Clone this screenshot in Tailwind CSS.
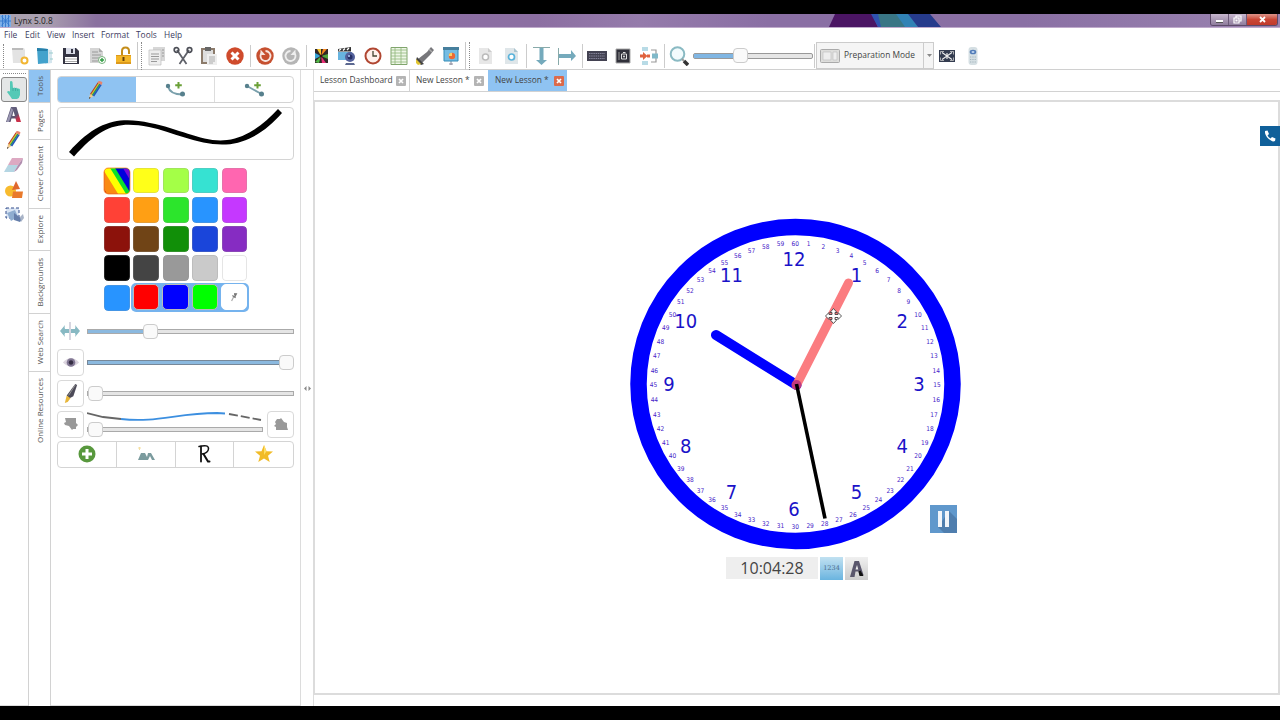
<!DOCTYPE html>
<html lang="en">
<head>
  <meta charset="UTF-8">
  <meta name="viewport" content="width=device-width, initial-scale=1.0">
  <title>Lynx 5.0.8</title>
  <script src="https://cdn.jsdelivr.net/npm/@tailwindcss/browser@4"></script>
</head>
<body class="w-[1280px] h-[720px] overflow-hidden bg-black py-3.5 font-['Open_Sans','Noto_Sans',sans-serif] text-[8.400px] text-[#444]">
  <!-- shared icons -->
  <svg class="absolute size-0">
    <defs>
      <linearGradient id="metal" x1="0" y1="0" x2="1" y2="1">
        <stop offset="0" stop-color="#6c6887"/><stop offset="0.6" stop-color="#5b5672"/><stop offset="0.8" stop-color="#c9304a"/>
      </linearGradient>
    </defs>
    <symbol id="pencil" viewBox="0 0 20 20">
      <path d="M3 19l1-5 3.500 2z" fill="#f0c890"/>
      <path d="M3 19l.5-2 1.200.8z" fill="#222"/>
      <path d="M4.800 14.400L12.200 3l1.400.8L6 15.200z" fill="#e8d020"/>
      <path d="M5.800 15L13.300 3.500l1.200.7L7 15.700z" fill="#2a9a50"/>
      <path d="M6.800 15.600L14.200 4.200l1.500.8L8.200 16.400z" fill="#2458b8"/>
      <path d="M4 14L11.600 2.600l.9.500L5 14.500z" fill="#b84020"/>
      <path d="M11.600 2.800l1-1.800q2.800-.3 3.900 1.600L15.500 5z" fill="#e8846c"/>
    </symbol>
    <symbol id="close" viewBox="0 0 10 10">
      <rect width="10" height="10" rx="1"/>
      <path d="M3 3l4 4M7 3L3 7" stroke="#fff" stroke-width="1.700"/>
    </symbol>
  </svg>

  <div class="h-[692px] bg-white flex flex-col">
    <!-- title bar -->
    <header class="relative h-[14px] shrink-0 flex items-center justify-between bg-[#8e73a6] border-b border-[#bfaacb]">
      <svg class="absolute inset-0" width="1280" height="13" viewBox="0 0 1280 13">
        <defs>
          <linearGradient id="glass">
            <stop offset="0" stop-color="#a8a0ad"/><stop offset="0.035" stop-color="#aaa0b0"/><stop offset="0.075" stop-color="#8a719f"/><stop offset="0.2" stop-color="#8c70a7"/><stop offset="0.42" stop-color="#8c6fa2"/><stop offset="0.5" stop-color="#957bab"/><stop offset="0.6" stop-color="#8a6fa4"/><stop offset="0.8" stop-color="#8a70a4"/><stop offset="1" stop-color="#9a83b0"/>
          </linearGradient>
        </defs>
        <rect width="1280" height="13" fill="url(#glass)"/>
        <path d="M835 0h37l6 13h-49z" fill="#4b1564"/>
        <path d="M871 0h13l2 13h-8z" fill="#2f53b0"/>
        <path d="M878 0h22l6 13h-25z" fill="#397685"/>
        <path d="M896 0h13l9 13h-13z" fill="#3182b5"/>
        <path d="M908 0h22l11 13h-23z" fill="#263b8c"/>
      </svg>
      <div class="relative flex items-center text-[#222]">
        <svg width="12" height="12" viewBox="0 0 12 12"><rect width="11" height="12" fill="#7db0e8"/><path d="M5.500 0v12M0 6h11M1.500 1.500l8 9M9.500 1.500l-8 9M2.500 0v12M8.500 0v12" stroke="#2f74cc" stroke-width="0.800"/></svg>
        <span class="ml-[2px] text-[8.300px] leading-3">Lynx 5.0.8</span>
      </div>
      <div class="relative self-start mr-[2px] flex h-[12px] rounded-b-[3px] border border-t-0 border-[#5d4a69] overflow-hidden">
        <span class="w-[18px] bg-linear-to-b from-[#c7b6ce] to-[#8f7d9d] border-r border-[#6d5a79] flex justify-center items-center"><i class="mt-1 w-[7px] h-[3px] bg-white border-b border-[#555]"></i></span>
        <span class="w-[18px] bg-linear-to-b from-[#c7b6ce] to-[#8f7d9d] border-r border-[#6d5a79] flex justify-center items-center">
          <svg width="9" height="9" viewBox="0 0 9 9" fill="none" stroke="#fff" stroke-width="1.200"><path d="M3 3V1h5v5H6"/><path d="M1 3h5v5H1zM3 5h1v1H3z"/></svg>
        </span>
        <span class="w-[30px] bg-linear-to-b from-[#dc9389] via-[#c94736] to-[#c03a2c] flex justify-center items-center">
          <svg width="7" height="7" viewBox="0 0 7 7"><path d="M1 1l5 5M6 1L1 6" stroke="#fff" stroke-width="1.800"/></svg>
        </span>
      </div>
    </header>

    <!-- menu -->
    <nav class="h-[13px] shrink-0 flex items-center pl-[4px] text-[#3d3b60] leading-[13px]">
      <span class="w-[21px]">File</span><span class="w-[22px]">Edit</span><span class="w-[25px]">View</span><span class="w-[29px]">Insert</span><span class="w-[35px]">Format</span><span class="w-[28px]">Tools</span><span>Help</span>
    </nav>

    <!-- toolbar -->
    <div class="h-[29px] shrink-0 flex items-center pt-px border-b border-[#d0d0d0]">
      <div class="w-[6px] h-[24px] flex pl-[3px]"><i class="border-l border-dotted border-[#888]"></i></div>
      <div class="flex [&>svg]:mx-[3px]">
        <svg width="20" height="20" viewBox="0 0 20 20"><path d="M3 2h12l1 2v13H4z" fill="#e3e3e3"/><path d="M3 2h11v2H3z" fill="#bbb"/><circle cx="15.500" cy="14.500" r="3" fill="#fff" stroke="#f2b632" stroke-width="2"/></svg>
        <svg width="20" height="20" viewBox="0 0 20 20"><path d="M9 3l8 1v13l-7 1z" fill="#d5e6ee"/><path d="M2 2l11 1v14L3 18z" fill="#43a2cc"/><path d="M2 2l11 1-1 2H2z" fill="#267fa9"/><path d="M14 7h4M15 13h3" stroke="#9cc" /></svg>
        <svg width="20" height="20" viewBox="0 0 20 20"><path d="M2 2h13l3 3v13H2z" fill="#343442"/><path d="M5 2h9v6H5z" fill="#dadde8"/><path d="M10 3h2v4h-2z" fill="#343442"/><path d="M4 11h12v6H4z" fill="#fff"/><path d="M4 13h12M4 15.500h12" stroke="#aaa"/></svg>
        <svg width="20" height="20" viewBox="0 0 20 20"><path d="M3 2h9l4 4v11H3z" fill="#d5d5d5"/><path d="M12 2l4 4h-4z" fill="#aaa"/><path d="M5 6h6M5 9h9M5 12h7M5 15h6" stroke="#999"/><circle cx="15" cy="14" r="3.500" fill="#fff" stroke="#79b37d"/><path d="M15 12v4M13 14h4" stroke="#2f9c42" stroke-width="1.400"/></svg>
        <svg width="20" height="20" viewBox="0 0 20 20"><path d="M9 10V5q0-3.500 3.500-3.500T16 5v3" fill="none" stroke="#c48d1a" stroke-width="2"/><path d="M3 9h15v9H3z" fill="#f3b628"/><path d="M3 9h15v1H3zM3 16h15v2H3z" fill="#dc991c"/><path d="M9.500 11h2v4h-2z" fill="#68430b"/></svg>
      </div>
      <div class="w-[8px] h-[28px] flex pl-px gap-[3px]"><i class="border-l border-[#c8c8c8]"></i><i class="border-l border-dotted border-[#888]"></i></div>
      <div class="flex [&>svg]:mx-[3px]">
        <svg width="20" height="20" viewBox="0 0 20 20"><path d="M6 1h12v14H6z" fill="#d7d7d7"/><path d="M2 4h12v15H2z" fill="#eee" stroke="#bbb" stroke-width=".7"/><path d="M4 8h8M4 10.500h8M4 13h8M4 15.500h6M15 4h2M15 7h2M15 10h2" stroke="#999"/></svg>
        <svg width="20" height="20" viewBox="0 0 20 20"><path d="M4 4l9.500 14M16 4L6.500 18" stroke="#5f6169" stroke-width="1.800"/><circle cx="3.500" cy="4" r="2.300" fill="none" stroke="#4d4f57" stroke-width="1.700"/><circle cx="16.500" cy="4" r="2.300" fill="none" stroke="#4d4f57" stroke-width="1.700"/></svg>
        <svg width="20" height="20" viewBox="0 0 20 20"><path d="M2 2h14v16H2z" fill="#8c7b6b"/><path d="M4 4h10v12H4z" fill="#ddd"/><path d="M6 1h6v4H6z" fill="#666"/><path d="M8 8h10v11H8z" fill="#eee"/><path d="M10 11h6M10 13h6M10 15h6M10 17h4" stroke="#999" stroke-width=".8"/></svg>
        <svg width="20" height="20" viewBox="0 0 20 20"><circle cx="10" cy="10" r="8.700" fill="#cf4b2c"/><path d="M6.500 6.500l7 7M13.500 6.500l-7 7" stroke="#fff" stroke-width="3"/></svg>
      </div>
      <div class="w-[4px] h-[22px] flex pl-[2px]"><i class="border-l border-[#ccc]"></i></div>
      <div class="flex [&>svg]:mx-[3px]">
        <svg width="20" height="20" viewBox="0 0 20 20"><circle cx="10" cy="10" r="8.700" fill="#c65030"/><path d="M6.500 7a5 5 0 1 0 4-2" fill="none" stroke="#f6e5df" stroke-width="1.800"/><path d="M5.500 3.500v5.500h5z" fill="#f6e5df"/></svg>
        <svg width="20" height="20" viewBox="0 0 20 20"><circle cx="10" cy="10" r="8.700" fill="#b5b5b5"/><path d="M13.500 7a5 5 0 1 1-4-2" fill="none" stroke="#eee" stroke-width="1.800"/><path d="M14.500 3.500v5.500h-5z" fill="#eee"/></svg>
      </div>
      <div class="w-[4px] h-[22px] flex pl-[2px]"><i class="border-l border-[#ccc]"></i></div>
      <div class="flex [&>svg]:mx-[3px]">
        <svg width="20" height="20" viewBox="0 0 20 20"><path d="M4 3h13v14H4z" fill="#312726"/><path d="M10 10L6 3h4z" fill="#f2c22c"/><path d="M10 10L12 3h4z" fill="#f58620"/><path d="M10 10l7-2v5z" fill="#50a83b"/><path d="M10 10l5 7h-4z" fill="#e93078"/><path d="M10 10l-2 7-4-1z" fill="#51b947"/><path d="M10 10L4 13V7z" fill="#35a3d3"/><circle cx="10" cy="10" r="1.500" fill="#311"/></svg>
        <svg width="20" height="20" viewBox="0 0 20 20"><path d="M1 6h14v8H1z" fill="#68b4df"/><path d="M1 3l13-2v4.500H1z" fill="#333"/><path d="M2 4.500l2-1.500M6 4.500l2-2M10 4l2-2" stroke="#fff" stroke-width="1.400"/><circle cx="13" cy="11" r="5" fill="#54619b"/><circle cx="13" cy="11" r="2.500" fill="#263067"/><circle cx="12" cy="10" r="1" fill="#b5d3ff"/><path d="M9 17h8l1 2H8z" fill="#5c6991"/></svg>
        <svg width="20" height="20" viewBox="0 0 20 20"><circle cx="10" cy="10" r="7.500" fill="#fff0eb" stroke="#b04631" stroke-width="2"/><path d="M10 5v5h4" fill="none" stroke="#443" stroke-width="1.300"/></svg>
        <svg width="20" height="20" viewBox="0 0 20 20"><path d="M2 1.500h16v17H2z" fill="#eef6e7" stroke="#80a56c"/><path d="M2 4h16M2 7h16M2 10h16M2 13h16M2 16h16M6 2v16M12 2v16" stroke="#91b77c" stroke-width=".8"/></svg>
        <svg width="20" height="20" viewBox="0 0 20 20"><path d="M16 1l3 3-4 5-8 8-4-4 9-7z" fill="#77777b"/><path d="M14 3l3 3" stroke="#aaa" stroke-width="1.500"/><path d="M2 11l7 7-3 1-5-5z" fill="#454545"/><path d="M1 13l5 5-3 1-2-2z" fill="#e2c632"/></svg>
        <svg width="20" height="20" viewBox="0 0 20 20"><path d="M10 15v4M8 18h4" stroke="#889"/><path d="M3 3h14v12H3z" fill="#75bde4" stroke="#348bb7"/><path d="M2 1h16v3H2z" fill="#467f9d"/><circle cx="11" cy="10" r="3.200" fill="#ed6a35"/><path d="M11 10V6.800a3.200 3.200 0 0 0-3.200 3.200z" fill="#fbd164"/></svg>
      </div>
      <div class="w-[8px] h-[28px] flex pl-px gap-[3px]"><i class="border-l border-[#c8c8c8]"></i><i class="border-l border-dotted border-[#888]"></i></div>
      <div class="flex [&>svg]:mx-[3px]">
        <svg width="20" height="20" viewBox="0 0 20 20"><path d="M4 2h9l4 4v12H4z" fill="#e7e7e7"/><path d="M13 2l4 4h-4z" fill="#ccc"/><circle cx="10.500" cy="11" r="3" fill="#fff" stroke="#bbb" stroke-width="1.500"/></svg>
        <svg width="20" height="20" viewBox="0 0 20 20"><path d="M4 2h9l4 4v12H4z" fill="#dfe6e9"/><path d="M13 2l4 4h-4z" fill="#aac4cf"/><circle cx="10.500" cy="11" r="3" fill="#fff" stroke="#5bb3da" stroke-width="1.700"/></svg>
      </div>
      <div class="w-[4px] h-[24px] flex pl-[2px]"><i class="border-l border-[#ccc]"></i></div>
      <div class="flex [&>svg]:mx-[3px]">
        <svg width="20" height="20" viewBox="0 0 20 20"><path d="M2 1.500h17" stroke="#8aa"/><path d="M8.500 2h4v12H16l-5.500 5L5 14h3.500z" fill="#75aabc"/></svg>
        <svg width="20" height="20" viewBox="0 0 20 20"><path d="M1.500 2v17" stroke="#8aa"/><path d="M2 8h12V4l5 6-5 5v-3H2z" fill="#75aabc"/></svg>
      </div>
      <div class="w-[4px] h-[24px] flex pl-[2px]"><i class="border-l border-[#ccc]"></i></div>
      <div class="flex [&>svg]:mx-[3px]">
        <svg width="20" height="20" viewBox="0 0 20 20"><path d="M0 5h20v10H0z" fill="#434252"/><path d="M2 7.500h16M2 10h16M2 12.500h16" stroke="#85849a" stroke-dasharray="1.500 .7"/></svg>
        <svg width="20" height="20" viewBox="0 0 20 20"><path d="M3 3h14v14H3z" fill="#30303a" stroke="#aaa"/><path d="M6 6v8" stroke="#999"/><path d="M8.500 8h5v5h-5zM10 6.500h2.500" fill="none" stroke="#ddd"/><circle cx="11" cy="10.500" r="1" fill="#ddd"/></svg>
        <svg width="20" height="20" viewBox="0 0 20 20"><path d="M12 4h5v4M17 12v4h-5M9 4H5M9 16H5" fill="none" stroke="#999" stroke-width="1.200"/><path d="M3 1h6v4H3zM3 15h6v4H3z" fill="#b8dbe6"/><path d="M13 7.500h6v5h-6z" fill="#80b9c9"/><path d="M1 8.500h3V6l4.500 4L4 14v-2.500H1z" fill="#df633f"/><path d="M8 8.500h3v3H8z" fill="#df633f"/></svg>
      </div>
      <div class="w-[4px] h-[24px] flex pl-[2px]"><i class="border-l border-[#ccc]"></i></div>
      <svg class="mx-[3px]" width="20" height="20" viewBox="0 0 20 20"><circle cx="8.500" cy="8" r="6.800" fill="#f2fbfd" stroke="#8abac3" stroke-width="2"/><path d="M13 13l2 2" stroke="#999" stroke-width="2"/><path d="M15 15l4 4" stroke="#333" stroke-width="3.500"/></svg>
      <!-- zoom slider -->
      <div class="relative ml-px w-[120px] h-[6px] rounded-[2px] border border-[#999] bg-[#e6e6e6]">
        <div class="w-[45px] h-full bg-[#80b6e3]"></div>
        <i class="absolute left-[39px] -top-[6px] size-[15px] rounded-[4px] border border-[#ccc] bg-[#fafafa]"></i>
      </div>
      <div class="w-[3px] h-[24px] flex pl-[1px]"><i class="border-l border-[#ccc]"></i></div>
      <button class="h-[27px] w-[118px] flex items-center border border-[#ccc] bg-[#f5f5f5]">
        <svg class="ml-[3px] shrink-0" width="20" height="14" viewBox="0 0 20 14"><rect x=".5" y=".5" width="19" height="13" rx="1" fill="#dededc" stroke="#aaa"/><path d="M3 3h8v8H3zM13 3h4v8h-4z" fill="#eee" stroke="#c2c2c2" stroke-width=".7"/></svg>
        <span class="ml-[4px] w-[79px] shrink-0 text-left whitespace-nowrap">Preparation Mode</span>
        <span class="h-full flex items-center border-l border-[#ccc] pl-[3px]"><svg width="5" height="3" viewBox="0 0 5 3"><path d="M0 0h5L2.500 3z" fill="#888"/></svg></span>
      </button>
      <div class="flex [&>svg]:mx-[3px]">
        <svg width="20" height="20" viewBox="0 0 20 20"><path d="M2 4h16v12H2z" fill="#343c50"/><path d="M5 6.500l10 7M15 6.500l-10 7M10 7v6" stroke="#eee" stroke-width="1.100"/><path d="M3.500 8.500V5.500H7M13 5.500h3.500v3M3.500 11.500v3H7M13 14.500h3.500v-3" stroke="#ccc" stroke-width=".8" fill="none"/></svg>
        <svg width="20" height="20" viewBox="0 0 20 20"><rect x="5.500" y="1" width="9" height="18" rx="3" fill="#d5dfe3"/><ellipse cx="10" cy="6" rx="3.300" ry="2.300" fill="#527cb8"/><ellipse cx="10" cy="6" rx="1.500" ry="1" fill="#bcd2ef"/><path d="M7 11h6M7 13.500h6M7 16h6" stroke="#a5b6be" stroke-dasharray="1.300 1"/></svg>
      </div>
    </div>

    <main class="flex-1 min-h-0 flex">
      <!-- tool strip -->
      <aside class="w-[28px] flex flex-col items-center border-b border-[#ddd]">
        <i class="mt-[3px] w-[23px] border-t border-dotted border-[#888]"></i>
        <div class="mt-[3px] w-[26px] h-[25px] rounded-[3px] border border-[#888] bg-[#e4e6e6] flex items-center justify-center">
          <svg width="20" height="20" viewBox="0 0 20 20"><path d="M6 1.500q1.500-1 2.500.5L9 8q1.500-1 2.500 0 1.500-.7 2.200.5 1.800-.4 2.300 1L16 15q-.500 3-3 4H8l-2-3-3-4q1-1.500 3-.5z" fill="#54c9b6"/><path d="M9 8v3M11.500 8v3M13.700 9v2" stroke="#359c93" stroke-width=".6"/></svg>
        </div>
        <div class="mt-[3px] flex flex-col gap-[5px]">
          <svg width="20" height="20" viewBox="0 0 20 20"><path d="M7 2h5.500L17 17h-4.500l-1-3.500H7.500L6.500 17H2z" fill="url(#metal)"/><path d="M8.300 11l1.200-5 1.400 5z" fill="#fff"/><path d="M2.500 17L7.500 3l1.500 2-4 12z" fill="#9a97b2"/></svg>
          <svg width="20" height="20"><use href="#pencil"/></svg>
          <svg width="20" height="20" viewBox="0 0 20 20"><path d="M8 3h11l-5 7H4z" fill="#dda9c2"/><path d="M4 10h10l-4 7H0z" fill="#b5d6e3"/><path d="M14 10l5-7-1 5-5 7-3 2z" fill="#b18eaf"/></svg>
          <svg width="20" height="20" viewBox="0 0 20 20"><circle cx="6.500" cy="11" r="5.500" fill="#f8bb2e"/><path d="M12 1l4 8-8 1z" fill="#df682f"/><path d="M9 11.500h10l-1 6.500H8z" fill="#e97a2c"/></svg>
          <svg width="20" height="20" viewBox="0 0 20 20"><rect x="2" y="3" width="13" height="10" fill="#dae5f4" stroke="#334c8b" stroke-dasharray="3 2"/><path d="M3 8l8-3 3 7-7 4z" fill="#8fadd0"/><path d="M10 8l8 6-2 3-6-2z" fill="#657eaa"/><path d="M16 12l3-3 1 4-3 4z" fill="#a9b4c7"/></svg>
        </div>
      </aside>

      <!-- vertical tabs -->
      <nav class="w-[23px] border-x border-[#d2d2d2] flex flex-col text-[8px] text-[#555] [&>div]:flex [&>div]:items-center [&>div]:justify-center [&>div]:border-b [&>div]:border-[#d2d2d2] [&_span]:[writing-mode:vertical-rl] [&_span]:rotate-180 [&_span]:whitespace-nowrap [&_span]:leading-none">
        <div class="h-[33px] bg-[#8fc3f2]"><span>Tools</span></div>
        <div class="h-[37px]"><span>Pages</span></div>
        <div class="h-[69px]"><span>Clever Content</span></div>
        <div class="h-[42px]"><span>Explore</span></div>
        <div class="h-[63px]"><span>Backgrounds</span></div>
        <div class="h-[58px]"><span>Web Search</span></div>
        <div class="h-[78px] border-b-0!"><span>Online Resources</span></div>
      </nav>

      <!-- pen settings -->
      <section class="w-[250px] px-[6px] pt-[6px] border-r border-b border-[#dcdcdc] flex flex-col">
        <div class="h-[27px] w-[237px] grid grid-cols-3 rounded-[4px] border border-[#d4d4d4] overflow-hidden [&>div]:flex [&>div]:items-center [&>div]:justify-center">
          <div class="bg-[#8fc3f2]"><svg class="mr-[2px]" width="20" height="20"><use href="#pencil"/></svg></div>
          <div class="border-r border-[#ddd]"><svg width="22" height="20" viewBox="0 0 22 20"><path d="M4 6.500q2 8 14.500 8" fill="none" stroke="#7aa0ac" stroke-width="1.800"/><circle cx="4" cy="6" r="2.200" fill="#57808d"/><circle cx="18.500" cy="14" r="2.500" fill="#57808d"/><path d="M14.500 2v6.500M11.200 5.200h6.600" stroke="#6aa037" stroke-width="2"/></svg></div>
          <div><svg width="22" height="20" viewBox="0 0 22 20"><path d="M4 6l14.500 8" fill="none" stroke="#7aa0ac" stroke-width="1.800"/><circle cx="4" cy="6" r="2.200" fill="#57808d"/><circle cx="18.500" cy="14" r="2.500" fill="#57808d"/><path d="M14.500 2v6.500M11.200 5.200h6.600" stroke="#6aa037" stroke-width="2"/></svg></div>
        </div>
        <div class="mt-[4px] h-[53px] w-[237px] rounded-[4px] border border-[#d4d4d4]">
          <svg width="235" height="51" viewBox="58 108 235 51"><path d="M69 152C98 119 121 117 150 123C181 129 204 143 227 140C248 137 264 124 278 109L282 113C267 130 249 143 226 144.500C200 146 173 132 149 127C119 121 102 125 74 156.500z"/></svg>
        </div>

        <!-- palette -->
        <div class="mt-[6.500px] ml-[45.700px] grid grid-cols-5 gap-[1.400px] w-[146px] [&>i]:size-[27.900px] [&>i]:rounded-[5px] [&>i]:border [&>i]:border-white [&>i]:bg-clip-padding [&>i]:shadow-[inset_0_0_0_1px_rgba(150,150,150,0.25)]">
          <svg width="28" height="28" viewBox="0 0 28 28"><defs><clipPath id="sw"><rect x="1.500" y="1.500" width="25" height="25" rx="4"/></clipPath></defs><rect x=".5" y=".5" width="27" height="27" rx="5" fill="#ffa64d"/><g clip-path="url(#sw)"><path d="M0 0h28v28H0z" fill="#d01810"/><path d="M-15-4l21 34h30V-4z" fill="#fa8a12"/><path d="M-4-4l21 34h15V-4z" fill="#ff0"/><path d="M4-4l21 34h12V-4z" fill="#0ce02b"/><path d="M9-4l21 34V-4z" fill="#00d"/><path d="M17-4l20 34V-4z" fill="#7a0ada"/></g></svg>
          <i class="bg-[#ffff19]"></i><i class="bg-[#a4ff47]"></i><i class="bg-[#36e2d2]"></i><i class="bg-[#ff66b0]"></i>
          <i class="bg-[#ff4136]"></i><i class="bg-[#ff9f14]"></i><i class="bg-[#2ce52c]"></i><i class="bg-[#2894ff]"></i><i class="bg-[#c538ff]"></i>
          <i class="bg-[#8c120b]"></i><i class="bg-[#704416]"></i><i class="bg-[#118f08]"></i><i class="bg-[#1a45da]"></i><i class="bg-[#862cc2]"></i>
          <i class="bg-black"></i><i class="bg-[#444]"></i><i class="bg-[#999]"></i><i class="bg-[#cacaca]"></i><i class="bg-white"></i>
          <i class="bg-[#2894ff]"></i>
          <div class="col-span-4 -m-px w-[118px] h-[29px] rounded-[5px] bg-[#75b3ee] flex items-center gap-[3px] pl-[2px] [&>i]:size-[26.300px] [&>i]:rounded-[5px] [&>i]:border [&>i]:border-[#bbb]">
            <i class="bg-[#f00]"></i><i class="bg-[#00f]"></i><i class="bg-[#0f0]"></i>
            <i class="bg-white flex items-center justify-center border-white!"><svg width="8" height="10" viewBox="0 0 10 12"><path d="M5 5L2 11" stroke="#aaa" stroke-width="1.500"/><path d="M3 4l4 3M5 2h3l-2 4" stroke="#777" fill="#777" stroke-width="1.500"/></svg></i>
          </div>
        </div>

        <!-- sliders -->
        <div class="mt-[6px] flex flex-col gap-[4px]">
          <div class="h-[27px] flex items-center">
            <div class="w-[26px] flex justify-center"><svg width="20" height="18" viewBox="0 0 20 18"><path d="M10 0v18" stroke="#bbc" stroke-width="1.200"/><path d="M0 9l5-6q-1 2.500 0 4h4v4H5q-1 1.500 0 4zM20 9l-5-6q1 2.500 0 4h-4v4h4q1 1.500 0 4z" fill="#88b9c3"/></svg></div>
            <div class="relative ml-[4px] w-[207px] h-[5px] border border-[#aaa] bg-[#e5e5e5]"><div class="w-[62px] h-full bg-[#8bb9df]"></div><i class="absolute left-[55px] -top-[6px] size-[15px] rounded-[4px] border border-[#ccc] bg-[#fafafa]"></i></div>
          </div>
          <div class="h-[27px] flex items-center">
            <div class="size-[27px] rounded-[4px] border border-[#d9d9d9] flex items-center justify-center"><svg width="18" height="13" viewBox="0 0 20 14"><path d="M1 7q9-10 18 0-9 9-18 0" fill="#dcd5df"/><circle cx="10" cy="7" r="4.800" fill="#827894"/><circle cx="10" cy="7" r="2.500" fill="#352d43"/></svg></div>
            <div class="relative ml-[3px] w-[207px] h-[5px] border border-[#789] bg-[#8bb9df]"><i class="absolute left-[191px] -top-[6px] size-[15px] rounded-[4px] border border-[#ccc] bg-[#fafafa]"></i></div>
          </div>
          <div class="h-[27px] flex items-center">
            <div class="size-[27px] rounded-[4px] border border-[#d9d9d9] flex items-center justify-center"><svg width="17" height="21" viewBox="0 0 18 22"><path d="M14 1l2 1-4 12-4 2-3-3z" fill="#4c4a58"/><path d="M14 2L7 13" stroke="#999" /><path d="M5 13l4 3-3 4-3 1z" fill="#e8b73b"/></svg></div>
            <div class="relative ml-[3px] w-[207px] h-[5px] border border-[#aaa] bg-[#e5e5e5]"><i class="absolute left-0 -top-[6px] size-[15px] rounded-[4px] border border-[#ccc] bg-[#fafafa]"></i></div>
          </div>
          <div class="h-[27px] flex items-center">
            <div class="size-[27px] rounded-[4px] border border-[#d9d9d9] flex items-center justify-center"><svg width="16" height="14" viewBox="0 0 16 14"><path d="M2 1h11v5l2 2-2 2v2h-3l-1 1-3-4-4-1L1 6l2-1z" fill="#999"/></svg></div>
            <div class="ml-[3px] w-[180px] h-full flex flex-col gap-[4px]">
              <svg width="176" height="12" viewBox="0 0 176 12"><g fill="none" stroke-width="1.800"><path d="M0 2l16 4 18 2" stroke="#666"/><path d="M34 8C70 12 90 2 130 2l8 .5" stroke="#3c8fe0"/><path d="M142 3l32 6" stroke="#666" stroke-dasharray="9 3"/></g></svg>
              <div class="relative w-[176px] h-[5px] border border-[#aaa] bg-[#e5e5e5]"><i class="absolute left-0 -top-[6px] size-[15px] rounded-[4px] border border-[#ccc] bg-[#fafafa]"></i></div>
            </div>
            <div class="size-[27px] rounded-[4px] border border-[#d9d9d9] flex items-center justify-center"><svg width="16" height="14" viewBox="0 0 16 14"><path d="M2 5l2-3h3l1-1 3 4 3 1v4l1 3H3v-3L1 9l2-2z" fill="#999"/></svg></div>
          </div>
        </div>

        <div class="mt-[3px] h-[27px] w-[237px] grid grid-cols-4 rounded-[4px] border border-[#d4d4d4] divide-x divide-[#d4d4d4] [&>div]:flex [&>div]:items-center [&>div]:justify-center">
          <div><svg width="18" height="18" viewBox="0 0 18 18"><circle cx="9" cy="9" r="8.500" fill="#58983d"/><path d="M9 4v10M4 9h10" stroke="#fff" stroke-width="3"/></svg></div>
          <div><svg width="18" height="18" viewBox="0 0 18 18"><path d="M1 3h3M2.500 2v3" stroke="#f5dfa0"/><path d="M1 15l3-7h4l2 4 1-4h3l4 7h-3l-2-4-2 4z" fill="#7b9b9e"/></svg></div>
          <div><svg width="16" height="20" viewBox="0 0 16 20" fill="none" stroke="#111" stroke-linecap="round"><path d="M3 2.500Q13 0 12.500 5 12 9 6 10" stroke-width="1.500"/><path d="M5 2.500V17.500" stroke-width="1.800"/><path d="M7.500 10l4.500 7.500h1.500" stroke-width="2"/></svg></div>
          <div><svg width="20" height="20" viewBox="0 0 20 20"><path d="M10 1l2.500 6.200 6.500.3-5 4.200 1.700 6.300L10 14.400 4.300 18 6 11.700 1 7.500l6.500-.3z" fill="#f1bb27"/><path d="M10 1l2.500 6.200L10 11z" fill="#ffdf67"/></svg></div>
        </div>
      </section>

      <!-- splitter -->
      <div class="w-[13px] flex items-center justify-center border-r border-[#ddd]"><svg width="7" height="5" viewBox="0 0 7 5"><path d="M0 2.500L2.500 0v5zM7 2.500L4.500 0v5z" fill="#888"/></svg></div>

      <section class="flex-1 min-w-0 flex flex-col">
        <div class="h-[22px] flex border-b border-[#d2d2d2] whitespace-nowrap">
          <div class="w-[96px] flex items-center justify-between pl-[6px] pr-[3px] border-r border-[#d2d2d2]">Lesson Dashboard<svg class="fill-[#b4b4b4]" width="10" height="10"><use href="#close"/></svg></div>
          <div class="w-[78px] flex items-center justify-between pl-[6px] pr-[4px]">New Lesson *<svg class="fill-[#b4b4b4]" width="10" height="10"><use href="#close"/></svg></div>
          <div class="w-[79px] flex items-center justify-between pl-[7px] pr-[3px] bg-[#8fc3f2]">New Lesson *<svg class="fill-[#db6a4b]" width="10" height="10"><use href="#close"/></svg></div>
        </div>
        <!-- lesson page, objects are placed freely -->
        <div class="relative -ml-px mt-[8px] h-[595px] border-2 border-[#dcdcdc]">
          <svg class="absolute left-[313px] top-[114px]" width="336" height="336" viewBox="628 216 336 336" id="clock">
            <circle cx="795.500" cy="384" r="157" fill="#fff" stroke="#00f" stroke-width="16.500"/>
            <g id="minutes" class="font-['DejaVu_Sans_Condensed','DejaVu_Sans',sans-serif]" font-size="6.500" fill="#4422c8" text-anchor="middle"></g>
            <g id="hours" class="font-['DejaVu_Sans_Condensed','DejaVu_Sans',sans-serif]" font-size="20" fill="#1a12c8" text-anchor="middle"></g>
            <g stroke-linecap="round">
              <path d="M796.500 385L716 335" stroke="#00f" stroke-width="10"/>
              <path d="M796.500 385L848.500 283" stroke="#fb7c80" stroke-width="9"/>
              <circle cx="796.500" cy="385" r="5" fill="#c33a7c"/>
            </g>
            <path d="M796.500 384L825 518.500" stroke="#000" stroke-width="3.600"/>
            <path d="M833.500 308.500l3.500 4h-2v2h3v-2l3.500 3.500-3.500 3.500v-2h-3v2h2l-3.500 4-3.500-4h2v-2h-3v2l-3.500-3.500 3.500-3.500v2h3v-2h-2z" fill="#fff" stroke="#444" stroke-width=".9"/>
          </svg>
          <div class="absolute left-[411px] top-[455px] flex gap-[2px]">
            <div class="w-[92px] h-[22px] bg-[#eee] text-[16px] leading-[22px] text-center text-[#444]">10:04:28</div>
            <div class="w-[23px] h-[23px] bg-linear-to-b from-[#c1e1f1] to-[#69b4df] text-[6.500px] leading-[22px] text-center font-['DejaVu_Serif',serif] text-[#4d6989]">1234</div>
            <div class="w-[23px] h-[23px] bg-linear-to-b from-[#f0f0f0] to-[#ccc] flex items-center justify-center">
              <svg width="16" height="18" viewBox="0 0 16 18"><path d="M5.500 1H10l4.500 14h-4l-1-3.500h-3L5.500 17H1z" fill="#59566c"/><path d="M6.500 9.500L8 5l1.300 4.500z" fill="#eee"/><path d="M9.500 11.500l2-1 3 5.500h-4z" fill="#111"/></svg>
            </div>
          </div>
          <div class="absolute left-[615px] top-[403px] w-[27px] h-[28px] bg-[#6098cc]">
            <svg width="27" height="28" viewBox="0 0 27 28"><path d="M19 6l8 8v14H14l-6-6z" fill="#4f7eae"/><path d="M8 6h4v16H8zM15 6h4v16h-4z" fill="#f1f5fa"/></svg>
          </div>
          <div class="absolute -right-[2px] top-[24px] w-[20px] h-[20px] bg-[#10609a]">
            <svg width="20" height="20" viewBox="0 0 20 20"><path d="M5 5l2.500-.5 1.500 3.500-1.500 1.500q1 2 3 3L12 11l3.500 1.500L15 15q-2 1-4-.5-5-3-6-7.500z" fill="#fff"/></svg>
          </div>
        </div>
      </section>
    </main>
  </div>

  <script>
    // Place n numbers evenly around the dial
    function ring(id, n, cx, cy, r, drop) {
      const g = document.getElementById(id);
      for (let i = 1; i <= n; i++) {
        const a = i / n * Math.PI * 2;
        const t = document.createElementNS('http://www.w3.org/2000/svg', 'text');
        // single minute digits sit at the left of their box
        const shift = n === 60 && i < 10 ? -1.5 : 0;
        t.setAttribute('x', cx + r * Math.sin(a) + shift);
        t.setAttribute('y', cy - r * Math.cos(a) + drop);
        t.textContent = i;
        g.appendChild(t);
      }
    }
    ring('minutes', 60, 795.3, 385, 141.7, 2.4);
    ring('hours', 12, 794, 383.5, 125, 7);
  </script>
</body>
</html>
